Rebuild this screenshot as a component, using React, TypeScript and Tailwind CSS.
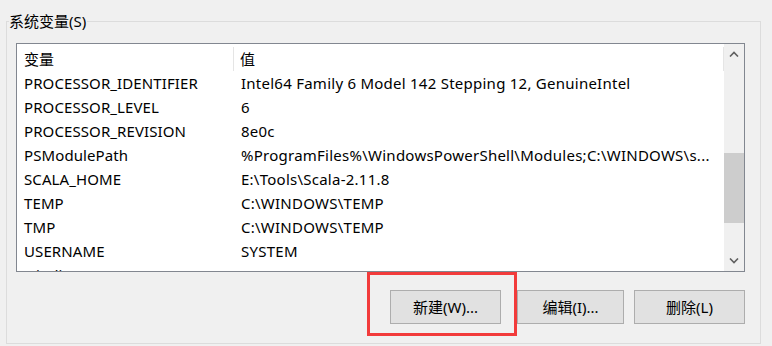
const FONT = "font-['Noto_Sans','Noto_Sans_CJK_SC',sans-serif]"

const rows: [string, string][] = [
  ['PROCESSOR_IDENTIFIER', 'Intel64 Family 6 Model 142 Stepping 12, GenuineIntel'],
  ['PROCESSOR_LEVEL', '6'],
  ['PROCESSOR_REVISION', '8e0c'],
  ['PSModulePath', '%ProgramFiles%\\WindowsPowerShell\\Modules;C:\\WINDOWS\\s...'],
  ['SCALA_HOME', 'E:\\Tools\\Scala-2.11.8'],
  ['TEMP', 'C:\\WINDOWS\\TEMP'],
  ['TMP', 'C:\\WINDOWS\\TEMP'],
  ['USERNAME', 'SYSTEM'],
  ['windir', '%SystemRoot%'],
]

function Chevron({ up }: { up?: boolean }) {
  return (
    <svg width="10" height="6" viewBox="0 0 10 6" className={up ? '' : 'rotate-180'}>
      <path d="M1 5.5 L5 1.5 L9 5.5" fill="none" stroke="#606060" strokeWidth="1.6" />
    </svg>
  )
}

function Button({ label, width }: { label: string; width: string }) {
  return (
    <button
      type="button"
      className={`${width} h-[34px] bg-[#e1e1e1] border border-[#adadad] text-[15px] text-black flex items-center justify-center`}
    >
      {label}
    </button>
  )
}

export default function App() {
  return (
    <div className={`${FONT} relative w-[772px] h-[346px] bg-[#f0f0f0] overflow-hidden text-black`}>
      {/* group box */}
      <div className="relative ml-[6px] mt-[21px] w-[755px] h-[323px] border border-[#dcdcdc]">
        <span className="absolute left-[2px] top-[-12px] bg-[#f0f0f0] text-[15px] leading-[22px] pr-[1px]">
          系统变量(S)
        </span>

        <div className="ml-[9px] mt-[21px] w-[729px] h-[229px] border border-[#828790] bg-white flex">
          <div className="flex-1 overflow-hidden text-[15px]">
            <div className="flex h-[27px] items-center pt-[3px]">
              <div className="w-[217px] pl-[7px] h-full flex items-center border-r border-[#e5e5e5]">变量</div>
              <div className="flex-1 pl-[6px] h-full flex items-center border-r border-[#e5e5e5]">值</div>
            </div>
            {rows.map(([name, value]) => (
              <div key={name} className="flex h-[24px] items-center whitespace-nowrap">
                <div className="w-[217px] pl-[7px] tracking-[0.1px]">{name}</div>
                <div className="flex-1 pl-[7px] tracking-[0.25px]">{value}</div>
              </div>
            ))}
          </div>

          {/* scrollbar */}
          <div className="w-[20px] bg-[#f0f0f0] flex flex-col">
            <div className="h-[20px] flex items-center justify-center">
              <Chevron up />
            </div>
            <div className="flex-1">
              <div className="mt-[89px] h-[70px] bg-[#cdcdcd]" />
            </div>
            <div className="h-[20px] flex items-center justify-center">
              <Chevron />
            </div>
          </div>
        </div>

        <div className="flex mt-[18px] ml-[383px]">
          <Button label="新建(W)..." width="w-[111px]" />
          <div className="w-[16px]" />
          <Button label="编辑(I)..." width="w-[107px]" />
          <div className="w-[10px]" />
          <Button label="删除(L)" width="w-[111px]" />
        </div>
      </div>

      {/* highlight annotation */}
      <div className="absolute left-[367px] top-[272px] w-[150px] h-[64px] border-[3px] border-[#f23b3b]" />
    </div>
  )
}
